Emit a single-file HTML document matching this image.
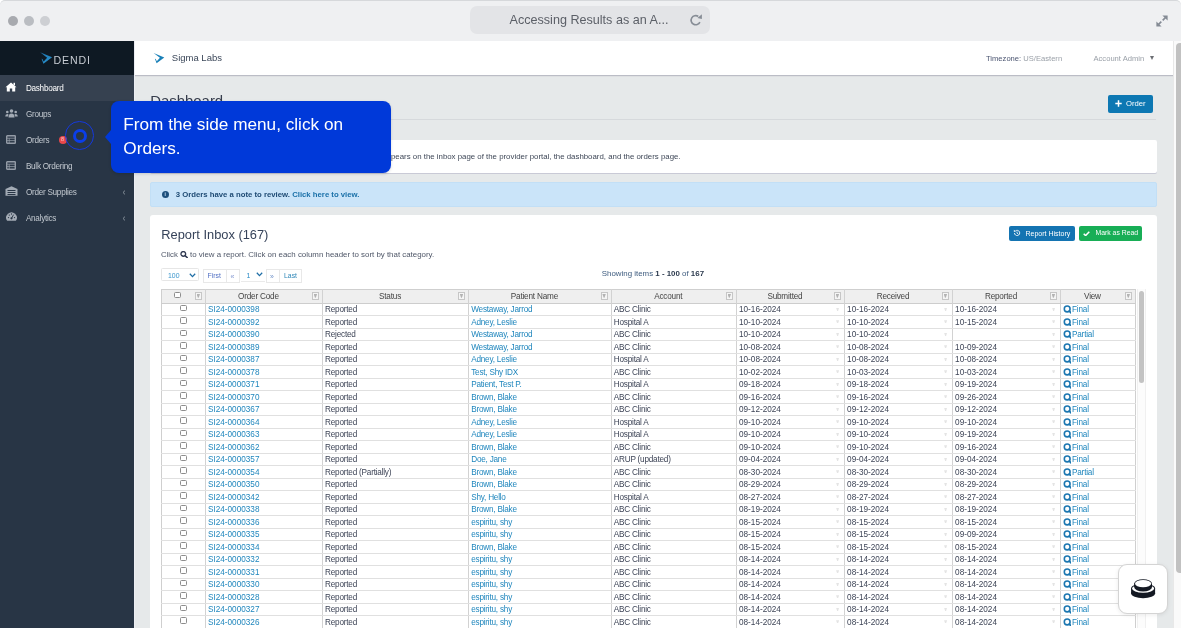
<!DOCTYPE html>
<html><head><meta charset="utf-8"><style>
*{box-sizing:border-box;margin:0;padding:0}
html,body{width:1181px;height:628px;overflow:hidden;background:#eff0f2;font-family:"Liberation Sans", sans-serif}
.a{position:absolute}
.t{position:absolute;white-space:nowrap;line-height:1}
.fi{position:absolute;width:7px;height:8px;border:1px solid #c6c6c6;background:#f5f5f5}
.fi:after{content:"";position:absolute;left:0.8px;top:1.1px;width:3.4px;height:3.6px;background:#b3b3b3;clip-path:polygon(0 0,100% 0,62% 100%,38% 100%)}
.cb{position:absolute;width:6.8px;height:6.8px;border:1px solid #8d8d8d;border-radius:1.5px;background:#fff}
.tri{position:absolute;color:#d6d6d6;font-size:5px}
</style></head><body><div id="root" style="position:absolute;left:0;top:0;width:1181px;height:628px;overflow:hidden;will-change:transform">

<div class="a" style="left:0;top:0;width:1181px;height:41px;background:#fff"></div>
<div class="a" style="left:0;top:0;width:1181px;height:41px;background:#eff0f2;border-top:1px solid #d6d8db;border-radius:5px 5px 0 0"></div>
<div class="a" style="left:8px;top:16px;width:10px;height:10px;border-radius:50%;background:#a8aaaf"></div>
<div class="a" style="left:24px;top:16px;width:10px;height:10px;border-radius:50%;background:#babdc2"></div>
<div class="a" style="left:40px;top:16px;width:10px;height:10px;border-radius:50%;background:#cdcfd3"></div>
<div class="a" style="left:470px;top:6px;width:240px;height:28px;border-radius:7px;background:#e3e4e7"></div>
<div class="t" style="left:509.5px;top:14px;font-size:12.6px;color:#5b5f67">Accessing Results as an A...</div>
<svg class="a" style="left:689px;top:13px" width="14" height="14" viewBox="0 0 14 14"><path d="M10.9 9.1 A4.6 4.6 0 1 1 9.3 3.4" fill="none" stroke="#878d96" stroke-width="1.6"/><path d="M8.4 4.9 L12.9 1.2 L12.9 5.9 Z" fill="#878d96"/></svg>
<svg class="a" style="left:1155px;top:14px" width="14" height="14" viewBox="0 0 14 14"><path d="M3 11 L6.3 7.7 M7.7 6.3 L11 3" stroke="#858b95" stroke-width="1.7"/><path d="M7.4 1.4 L12.6 1.4 L12.6 6.6 Z" fill="#858b95"/><path d="M1.4 7.4 L1.4 12.6 L6.6 12.6 Z" fill="#858b95"/></svg>
<div class="a" style="left:0;top:41px;width:134px;height:587px;background:#283545"></div>
<div class="a" style="left:0;top:41px;width:134px;height:34px;background:#0e1923"></div>
<svg class="a" style="left:35.5px;top:49px" width="18" height="17" viewBox="0 0 16 15.2"><defs><linearGradient id="lg" x1="0" y1="0" x2="1" y2="1"><stop offset="0" stop-color="#1c6ea6"/><stop offset="1" stop-color="#2b9ad8"/></linearGradient></defs><path d="M3.6 3.0 L14.3 7.4 L6.6 13.2 L4.9 8.8 L5.7 8.9 L6.8 11.2 L9.9 7.8 Z" fill="url(#lg)"/></svg>
<div class="t" style="left:53.5px;top:55px;font-size:10.6px;letter-spacing:0.85px;color:#c8cdd4;font-weight:normal">DENDI</div>
<div class="a" style="left:0;top:75px;width:134px;height:26px;background:#364150"></div>
<div class="t" style="left:25.9px;top:84.9px;font-size:8.2px;letter-spacing:-0.28px;color:#ffffff">Dashboard</div>
<div class="t" style="left:25.9px;top:110.9px;font-size:8.2px;letter-spacing:-0.28px;color:#c2c8cf">Groups</div>
<div class="t" style="left:25.9px;top:136.9px;font-size:8.2px;letter-spacing:-0.28px;color:#c2c8cf">Orders</div>
<div class="t" style="left:25.9px;top:162.9px;font-size:8.2px;letter-spacing:-0.28px;color:#c2c8cf">Bulk Ordering</div>
<div class="t" style="left:25.9px;top:188.9px;font-size:8.2px;letter-spacing:-0.28px;color:#c2c8cf">Order Supplies</div>
<div class="t" style="left:25.9px;top:214.9px;font-size:8.2px;letter-spacing:-0.28px;color:#c2c8cf">Analytics</div>
<svg class="a" style="left:5px;top:82px" width="12" height="10" viewBox="0 0 12 10"><path d="M6 0.5 L11.5 5.2 L10.2 5.2 L10.2 9.5 L7.2 9.5 L7.2 6.5 L4.8 6.5 L4.8 9.5 L1.8 9.5 L1.8 5.2 L0.5 5.2 Z" fill="#fff"/><rect x="8.5" y="0.8" width="1.5" height="2.5" fill="#fff"/></svg>
<svg class="a" style="left:5px;top:109px" width="13" height="9" viewBox="0 0 13 9"><circle cx="6.5" cy="2" r="1.8" fill="#a3abb5"/><circle cx="2.3" cy="3" r="1.3" fill="#a3abb5"/><circle cx="10.7" cy="3" r="1.3" fill="#a3abb5"/><path d="M3.5 8.5 Q3.5 4.5 6.5 4.5 Q9.5 4.5 9.5 8.5 Z" fill="#a3abb5"/><path d="M0.2 7.5 Q0.2 5 2.3 5 Q3.2 5 3.5 5.5 L3 7.5 Z" fill="#a3abb5"/><path d="M12.8 7.5 Q12.8 5 10.7 5 Q9.8 5 9.5 5.5 L10 7.5 Z" fill="#a3abb5"/></svg>
<svg class="a" style="left:6px;top:135px" width="10" height="9" viewBox="0 0 10 9"><rect x="0.7" y="0.7" width="8.6" height="7.6" rx="0.6" fill="none" stroke="#949ca7" stroke-width="1.4"/><path d="M0.7 3.2 H9.3 M0.7 5.6 H9.3 M3.2 3.2 V8.3" stroke="#949ca7" stroke-width="0.8"/></svg>
<svg class="a" style="left:6px;top:161px" width="10" height="9" viewBox="0 0 10 9"><rect x="0.7" y="0.7" width="8.6" height="7.6" rx="0.6" fill="none" stroke="#949ca7" stroke-width="1.4"/><path d="M0.7 3.2 H9.3 M0.7 5.6 H9.3 M3.2 3.2 V8.3" stroke="#949ca7" stroke-width="0.8"/></svg>
<svg class="a" style="left:4.5px;top:186px" width="13" height="10" viewBox="0 0 13 10"><path d="M0.5 3 L6.5 0.3 L12.5 3 L12.5 9.7 L0.5 9.7 Z" fill="#a3abb5"/><rect x="2.5" y="4" width="8" height="1" fill="#283545"/><rect x="2.5" y="6" width="8" height="1" fill="#283545"/><rect x="2.5" y="8" width="8" height="1" fill="#283545"/></svg>
<svg class="a" style="left:5.5px;top:212px" width="11" height="9" viewBox="0 0 11 9"><path d="M1.2 8.8 A5.3 5.3 0 1 1 9.8 8.8 Z" fill="#a3abb5"/><circle cx="5.5" cy="6.3" r="1.1" fill="#283545"/><path d="M5.5 6.3 L7.6 2.6" stroke="#283545" stroke-width="0.9"/><circle cx="2.5" cy="5.6" r="0.65" fill="#283545"/><circle cx="3.3" cy="3.1" r="0.65" fill="#283545"/><circle cx="5.5" cy="2" r="0.65" fill="#283545"/><circle cx="8.5" cy="5.6" r="0.65" fill="#283545"/></svg>
<svg class="a" style="left:121.5px;top:189.5px" width="4" height="5" viewBox="0 0 4 5"><path d="M3 0.6 L1 2.5 L3 4.4" fill="none" stroke="#8f98a3" stroke-width="0.9"/></svg>
<svg class="a" style="left:121.5px;top:215.5px" width="4" height="5" viewBox="0 0 4 5"><path d="M3 0.6 L1 2.5 L3 4.4" fill="none" stroke="#8f98a3" stroke-width="0.9"/></svg>
<div class="a" style="left:58.6px;top:135.8px;width:8.4px;height:8.4px;border-radius:50%;background:#e8484b"></div>
<div class="t" style="left:61px;top:137.2px;font-size:5.5px;color:#f7c2c3">8</div>
<div class="a" style="left:134px;top:75px;width:1039px;height:553px;background:#e6e9ea"></div>
<div class="a" style="left:134px;top:41px;width:1039px;height:34px;background:#fff;box-shadow:0 1px 1px rgba(60,60,90,0.25)"></div>
<div class="a" style="left:134px;top:41px;width:1px;height:587px;background:#eceef3"></div>
<svg class="a" style="left:150px;top:50px" width="16" height="16" viewBox="0 0 16 16"><path d="M3.6 3.0 L14.3 7.4 L6.6 13.2 L4.9 8.8 L5.7 8.9 L6.8 11.2 L9.9 7.8 Z" fill="#1a80b8"/></svg>
<div class="t" style="left:171.8px;top:52.9px;font-size:9.5px;color:#3b4759">Sigma Labs</div>
<div class="t" style="left:986px;top:54.8px;font-size:7.6px;color:#4a5470">Timezone: <span style="color:#9aa0a8">US/Eastern</span></div>
<div class="t" style="left:1093.5px;top:54.8px;font-size:7.6px;color:#9aa0a8">Account Admin</div>
<div class="a" style="left:1150.4px;top:55.6px;border-left:2.4px solid transparent;border-right:2.4px solid transparent;border-top:4.6px solid #6b6e73"></div>
<div class="a" style="left:1173px;top:41px;width:8px;height:587px;background:#fafafa;border-left:1px solid #e8e8e8"></div>
<div class="a" style="left:1176px;top:42.7px;width:8px;height:530px;background:#c1c1c1;border-radius:4px"></div>
<div class="t" style="left:150.3px;top:93.7px;font-size:14.9px;color:#363d4c">Dashboard</div>
<div class="a" style="left:150px;top:119px;width:1006px;height:1px;background:#d6d9dc"></div>
<div class="a" style="left:1107.7px;top:95px;width:45px;height:18px;background:#0d78b3;border-radius:2px"></div>
<svg class="a" style="left:1115px;top:100.2px" width="7" height="7" viewBox="0 0 7 7"><path d="M3.5 0.3 V6.7 M0.3 3.5 H6.7" stroke="#fff" stroke-width="1.5"/></svg>
<div class="t" style="left:1126px;top:99.9px;font-size:7.7px;color:#fff">Order</div>
<div class="a" style="left:150px;top:139.7px;width:1007px;height:33.3px;background:#fff;border-radius:2px;box-shadow:0 1px 0 #c9cad6"></div>
<div class="t" style="left:391px;top:152.9px;font-size:7.85px;color:#3f4858">pears on the inbox page of the provider portal, the dashboard, and the orders page.</div>
<div class="a" style="left:150px;top:182px;width:1007px;height:25.4px;background:#cae4f9;border:1px solid #c2dff6;border-radius:2px"></div>
<div class="a" style="left:161.6px;top:190.6px;width:7px;height:7px;border-radius:50%;background:#1d4f7c"></div>
<div class="t" style="left:164.4px;top:191.6px;font-size:5px;color:#cae4f9;font-weight:bold">i</div>
<div class="t" style="left:175.7px;top:190.9px;font-size:7.75px;font-weight:bold;color:#1e4a73">3 Orders have a note to review. <span style="color:#1a70a8">Click here to view.</span></div>
<div class="a" style="left:150px;top:215.2px;width:1007px;height:420px;background:#fff;border-radius:3px"></div>
<div class="t" style="left:161.3px;top:229.3px;font-size:12.85px;color:#36435a">Report Inbox (167)</div>
<div class="t" style="left:161px;top:250.7px;font-size:7.8px;color:#4f5768">Click</div>
<svg class="a" style="left:179.5px;top:250.8px" width="8" height="7" viewBox="0 0 8 7"><circle cx="3.3" cy="2.9" r="2.35" fill="none" stroke="#2f3850" stroke-width="1.3"/><path d="M5 4.6 L7.2 6.6" stroke="#2f3850" stroke-width="1.5" stroke-linecap="round"/></svg>
<div class="t" style="left:190px;top:250.7px;font-size:7.9px;color:#4f5768">to view a report. Click on each column header to sort by that category.</div>
<div class="a" style="left:1009px;top:226px;width:66px;height:15px;background:#1474b2;border-radius:2px"></div>
<div class="t" style="left:1025.5px;top:229.9px;font-size:7px;color:#fff">Report History</div>
<svg class="a" style="left:1012.5px;top:229px" width="8" height="8" viewBox="0 0 8 8"><path d="M1.5 4 A2.6 2.6 0 1 0 2.4 2" fill="none" stroke="#fff" stroke-width="0.9"/><path d="M0.8 0.8 L2.8 2.2 L0.9 3 Z" fill="#fff"/><path d="M4 2.5 V4.2 L5.2 5" stroke="#fff" stroke-width="0.8" fill="none"/></svg>
<div class="a" style="left:1079px;top:226px;width:63px;height:15px;background:#18ae56;border-radius:2px"></div>
<svg class="a" style="left:1083px;top:230.5px" width="7" height="5.5" viewBox="0 0 7 5.5"><path d="M0.7 2.8 L2.6 4.6 L6.3 0.8" fill="none" stroke="#fff" stroke-width="1.5"/></svg>
<div class="t" style="left:1095.5px;top:230.2px;font-size:6.85px;color:#fff">Mark as Read</div>
<div class="a" style="left:161.2px;top:268.4px;width:38px;height:13.1px;border:1px solid #e6e6e6;border-radius:1.5px;background:#fff"></div>
<div class="t" style="left:168px;top:272.5px;font-size:6.9px;color:#3a95cc">100</div>
<svg class="a" style="left:189px;top:272.5px" width="7" height="5" viewBox="0 0 7 5"><path d="M0.8 0.8 L3.5 3.6 L6.2 0.8" fill="none" stroke="#1f6ea6" stroke-width="1.3"/></svg>
<div class="a" style="left:203px;top:268.6px;width:37.2px;height:14.8px;border:1px solid #e8e8e8;background:#fff"></div>
<div class="a" style="left:225.5px;top:268.6px;width:1px;height:14.8px;background:#e8e8e8"></div>
<div class="t" style="left:207.5px;top:272.5px;font-size:6.9px;color:#5170c4">First</div>
<div class="t" style="left:230.5px;top:273.8px;font-size:6.9px;color:#8095d0">&laquo;</div>
<div class="a" style="left:240.7px;top:280.6px;width:24.3px;height:1px;background:#eaeaea"></div>
<div class="t" style="left:246.5px;top:272.8px;font-size:6.9px;color:#2a8bc6">1</div>
<svg class="a" style="left:256px;top:272px" width="7" height="5" viewBox="0 0 7 5"><path d="M0.8 0.8 L3.5 3.6 L6.2 0.8" fill="none" stroke="#1f6ea6" stroke-width="1.3"/></svg>
<div class="a" style="left:265.6px;top:268.6px;width:36px;height:14.8px;border:1px solid #e8e8e8;background:#fff"></div>
<div class="a" style="left:279.3px;top:268.6px;width:1px;height:14.8px;background:#e8e8e8"></div>
<div class="t" style="left:270px;top:273.8px;font-size:6.9px;color:#6c8fc9">&raquo;</div>
<div class="t" style="left:284px;top:272.5px;font-size:6.9px;color:#2f87b8">Last</div>
<div class="t" style="left:601.8px;top:270.2px;font-size:7.9px;color:#3d5b7e">Showing items <b style="color:#2c3a4e">1 - 100</b> of <b style="color:#2c3a4e">167</b></div>
<div class="a" style="left:161.0px;top:289.3px;width:975.0000000000001px;height:14.3px;background:#efefef;border:1px solid #cfcfcf;border-bottom:1px solid #cdcdcd"></div>
<div class="a" style="left:161.0px;top:303.6px;width:975.0000000000001px;height:329.4px;background:#fff;border-left:1px solid #cfcfcf;border-right:1px solid #cfcfcf"></div>
<div class="a" style="left:204.9px;top:289.3px;width:1px;height:338.7px;background:#d2d2d2"></div>
<div class="a" style="left:322.0px;top:289.3px;width:1px;height:338.7px;background:#d2d2d2"></div>
<div class="a" style="left:468.1px;top:289.3px;width:1px;height:338.7px;background:#d2d2d2"></div>
<div class="a" style="left:610.7px;top:289.3px;width:1px;height:338.7px;background:#d2d2d2"></div>
<div class="a" style="left:735.9px;top:289.3px;width:1px;height:338.7px;background:#d2d2d2"></div>
<div class="a" style="left:844.0px;top:289.3px;width:1px;height:338.7px;background:#d2d2d2"></div>
<div class="a" style="left:952.0px;top:289.3px;width:1px;height:338.7px;background:#d2d2d2"></div>
<div class="a" style="left:1060.0px;top:289.3px;width:1px;height:338.7px;background:#d2d2d2"></div>
<div class="a" style="left:161.0px;top:315.40px;width:975.0000000000001px;height:1px;background:#e0e0e0"></div>
<div class="a" style="left:161.0px;top:327.90px;width:975.0000000000001px;height:1px;background:#e0e0e0"></div>
<div class="a" style="left:161.0px;top:340.40px;width:975.0000000000001px;height:1px;background:#e0e0e0"></div>
<div class="a" style="left:161.0px;top:352.90px;width:975.0000000000001px;height:1px;background:#e0e0e0"></div>
<div class="a" style="left:161.0px;top:365.40px;width:975.0000000000001px;height:1px;background:#e0e0e0"></div>
<div class="a" style="left:161.0px;top:377.90px;width:975.0000000000001px;height:1px;background:#e0e0e0"></div>
<div class="a" style="left:161.0px;top:390.40px;width:975.0000000000001px;height:1px;background:#e0e0e0"></div>
<div class="a" style="left:161.0px;top:402.90px;width:975.0000000000001px;height:1px;background:#e0e0e0"></div>
<div class="a" style="left:161.0px;top:415.40px;width:975.0000000000001px;height:1px;background:#e0e0e0"></div>
<div class="a" style="left:161.0px;top:427.90px;width:975.0000000000001px;height:1px;background:#e0e0e0"></div>
<div class="a" style="left:161.0px;top:440.40px;width:975.0000000000001px;height:1px;background:#e0e0e0"></div>
<div class="a" style="left:161.0px;top:452.90px;width:975.0000000000001px;height:1px;background:#e0e0e0"></div>
<div class="a" style="left:161.0px;top:465.40px;width:975.0000000000001px;height:1px;background:#e0e0e0"></div>
<div class="a" style="left:161.0px;top:477.90px;width:975.0000000000001px;height:1px;background:#e0e0e0"></div>
<div class="a" style="left:161.0px;top:490.40px;width:975.0000000000001px;height:1px;background:#e0e0e0"></div>
<div class="a" style="left:161.0px;top:502.90px;width:975.0000000000001px;height:1px;background:#e0e0e0"></div>
<div class="a" style="left:161.0px;top:515.40px;width:975.0000000000001px;height:1px;background:#e0e0e0"></div>
<div class="a" style="left:161.0px;top:527.90px;width:975.0000000000001px;height:1px;background:#e0e0e0"></div>
<div class="a" style="left:161.0px;top:540.40px;width:975.0000000000001px;height:1px;background:#e0e0e0"></div>
<div class="a" style="left:161.0px;top:552.90px;width:975.0000000000001px;height:1px;background:#e0e0e0"></div>
<div class="a" style="left:161.0px;top:565.40px;width:975.0000000000001px;height:1px;background:#e0e0e0"></div>
<div class="a" style="left:161.0px;top:577.90px;width:975.0000000000001px;height:1px;background:#e0e0e0"></div>
<div class="a" style="left:161.0px;top:590.40px;width:975.0000000000001px;height:1px;background:#e0e0e0"></div>
<div class="a" style="left:161.0px;top:602.90px;width:975.0000000000001px;height:1px;background:#e0e0e0"></div>
<div class="a" style="left:161.0px;top:615.40px;width:975.0000000000001px;height:1px;background:#e0e0e0"></div>
<span class="fi" style="left:194.8px;top:292.0px"></span>
<div class="t" style="left:203.9px;width:109.1px;text-align:center;top:292.7px;font-size:8.2px;letter-spacing:-0.2px;color:#454545">Order Code</div>
<span class="fi" style="left:311.9px;top:292.0px"></span>
<div class="t" style="left:321.0px;width:138.10000000000002px;text-align:center;top:292.7px;font-size:8.2px;letter-spacing:-0.2px;color:#454545">Status</div>
<span class="fi" style="left:458.0px;top:292.0px"></span>
<div class="t" style="left:467.1px;width:134.60000000000002px;text-align:center;top:292.7px;font-size:8.2px;letter-spacing:-0.2px;color:#454545">Patient Name</div>
<span class="fi" style="left:600.6px;top:292.0px"></span>
<div class="t" style="left:609.7px;width:117.19999999999993px;text-align:center;top:292.7px;font-size:8.2px;letter-spacing:-0.2px;color:#454545">Account</div>
<span class="fi" style="left:725.8px;top:292.0px"></span>
<div class="t" style="left:734.9px;width:100.10000000000002px;text-align:center;top:292.7px;font-size:8.2px;letter-spacing:-0.2px;color:#454545">Submitted</div>
<span class="fi" style="left:833.9px;top:292.0px"></span>
<div class="t" style="left:843.0px;width:100.0px;text-align:center;top:292.7px;font-size:8.2px;letter-spacing:-0.2px;color:#454545">Received</div>
<span class="fi" style="left:941.9px;top:292.0px"></span>
<div class="t" style="left:951.0px;width:100.0px;text-align:center;top:292.7px;font-size:8.2px;letter-spacing:-0.2px;color:#454545">Reported</div>
<span class="fi" style="left:1049.9px;top:292.0px"></span>
<div class="t" style="left:1059.0px;width:66.90000000000009px;text-align:center;top:292.7px;font-size:8.2px;letter-spacing:-0.2px;color:#454545">View</div>
<span class="fi" style="left:1124.8000000000002px;top:292.0px"></span>
<span class="cb" style="left:174.4px;top:291.5px"></span>
<div class="a" style="left:1137px;top:289.3px;width:9px;height:338.7px;background:#fcfcfc;border-left:1px solid #f0f0f0;border-right:1px solid #f0f0f0"></div>
<div class="a" style="left:1139px;top:291px;width:5.2px;height:92px;background:#c3c3c3;border-radius:2.6px"></div>
<span class="cb" style="left:180px;top:304.50px"></span>
<div class="t" style="left:208.0px;top:306.40px;font-size:8.2px;letter-spacing:0px;color:#1f86bd">SI24-0000398</div>
<div class="t" style="left:325.1px;top:306.40px;font-size:8.2px;letter-spacing:-0.22px;color:#3d4456">Reported</div>
<div class="t" style="left:471.20000000000005px;top:306.40px;font-size:8.2px;letter-spacing:-0.22px;color:#1f86bd">Westaway, Jarrod</div>
<div class="t" style="left:613.8000000000001px;top:306.40px;font-size:8.2px;letter-spacing:-0.22px;color:#3d4456">ABC Clinic</div>
<div class="t" style="left:739.0px;top:306.40px;font-size:8.2px;letter-spacing:0px;color:#3d4456">10-16-2024</div>
<div class="a" style="left:836.1px;top:307.80px;width:3px;height:3.2px;background:#e4e4e4;clip-path:polygon(0 0,100% 0,65% 100%,35% 100%)"></div>
<div class="t" style="left:847.1px;top:306.40px;font-size:8.2px;letter-spacing:0px;color:#3d4456">10-16-2024</div>
<div class="a" style="left:944.1px;top:307.80px;width:3px;height:3.2px;background:#e4e4e4;clip-path:polygon(0 0,100% 0,65% 100%,35% 100%)"></div>
<div class="t" style="left:955.1px;top:306.40px;font-size:8.2px;letter-spacing:0px;color:#3d4456">10-16-2024</div>
<div class="a" style="left:1052.1px;top:307.80px;width:3px;height:3.2px;background:#e4e4e4;clip-path:polygon(0 0,100% 0,65% 100%,35% 100%)"></div>
<div class="a" style="left:1062.6px;top:305.20px;width:8.6px;height:8.6px"><svg style="position:absolute;left:0;top:0" width="8.6" height="8.6" viewBox="0 0 8 8"><circle cx="3.9" cy="3.7" r="2.7" fill="none" stroke="#1b76b0" stroke-width="1.45"/><path d="M5.9 5.7 L7.5 7.4" stroke="#1b76b0" stroke-width="1.7" stroke-linecap="round"/></svg></div>
<div class="t" style="left:1072.0px;top:306.40px;font-size:8.2px;letter-spacing:-0.2px;color:#1f86bd">Final</div>
<span class="cb" style="left:180px;top:317.00px"></span>
<div class="t" style="left:208.0px;top:318.90px;font-size:8.2px;letter-spacing:0px;color:#1f86bd">SI24-0000392</div>
<div class="t" style="left:325.1px;top:318.90px;font-size:8.2px;letter-spacing:-0.22px;color:#3d4456">Reported</div>
<div class="t" style="left:471.20000000000005px;top:318.90px;font-size:8.2px;letter-spacing:-0.22px;color:#1f86bd">Adney, Leslie</div>
<div class="t" style="left:613.8000000000001px;top:318.90px;font-size:8.2px;letter-spacing:-0.22px;color:#3d4456">Hospital A</div>
<div class="t" style="left:739.0px;top:318.90px;font-size:8.2px;letter-spacing:0px;color:#3d4456">10-10-2024</div>
<div class="a" style="left:836.1px;top:320.30px;width:3px;height:3.2px;background:#e4e4e4;clip-path:polygon(0 0,100% 0,65% 100%,35% 100%)"></div>
<div class="t" style="left:847.1px;top:318.90px;font-size:8.2px;letter-spacing:0px;color:#3d4456">10-10-2024</div>
<div class="a" style="left:944.1px;top:320.30px;width:3px;height:3.2px;background:#e4e4e4;clip-path:polygon(0 0,100% 0,65% 100%,35% 100%)"></div>
<div class="t" style="left:955.1px;top:318.90px;font-size:8.2px;letter-spacing:0px;color:#3d4456">10-15-2024</div>
<div class="a" style="left:1052.1px;top:320.30px;width:3px;height:3.2px;background:#e4e4e4;clip-path:polygon(0 0,100% 0,65% 100%,35% 100%)"></div>
<div class="a" style="left:1062.6px;top:317.70px;width:8.6px;height:8.6px"><svg style="position:absolute;left:0;top:0" width="8.6" height="8.6" viewBox="0 0 8 8"><circle cx="3.9" cy="3.7" r="2.7" fill="none" stroke="#1b76b0" stroke-width="1.45"/><path d="M5.9 5.7 L7.5 7.4" stroke="#1b76b0" stroke-width="1.7" stroke-linecap="round"/></svg></div>
<div class="t" style="left:1072.0px;top:318.90px;font-size:8.2px;letter-spacing:-0.2px;color:#1f86bd">Final</div>
<span class="cb" style="left:180px;top:329.50px"></span>
<div class="t" style="left:208.0px;top:331.40px;font-size:8.2px;letter-spacing:0px;color:#1f86bd">SI24-0000390</div>
<div class="t" style="left:325.1px;top:331.40px;font-size:8.2px;letter-spacing:-0.22px;color:#3d4456">Rejected</div>
<div class="t" style="left:471.20000000000005px;top:331.40px;font-size:8.2px;letter-spacing:-0.22px;color:#1f86bd">Westaway, Jarrod</div>
<div class="t" style="left:613.8000000000001px;top:331.40px;font-size:8.2px;letter-spacing:-0.22px;color:#3d4456">ABC Clinic</div>
<div class="t" style="left:739.0px;top:331.40px;font-size:8.2px;letter-spacing:0px;color:#3d4456">10-10-2024</div>
<div class="a" style="left:836.1px;top:332.80px;width:3px;height:3.2px;background:#e4e4e4;clip-path:polygon(0 0,100% 0,65% 100%,35% 100%)"></div>
<div class="t" style="left:847.1px;top:331.40px;font-size:8.2px;letter-spacing:0px;color:#3d4456">10-10-2024</div>
<div class="a" style="left:944.1px;top:332.80px;width:3px;height:3.2px;background:#e4e4e4;clip-path:polygon(0 0,100% 0,65% 100%,35% 100%)"></div>
<div class="a" style="left:1052.1px;top:332.80px;width:3px;height:3.2px;background:#e4e4e4;clip-path:polygon(0 0,100% 0,65% 100%,35% 100%)"></div>
<div class="a" style="left:1062.6px;top:330.20px;width:8.6px;height:8.6px"><svg style="position:absolute;left:0;top:0" width="8.6" height="8.6" viewBox="0 0 8 8"><circle cx="3.9" cy="3.7" r="2.7" fill="none" stroke="#1b76b0" stroke-width="1.45"/><path d="M5.9 5.7 L7.5 7.4" stroke="#1b76b0" stroke-width="1.7" stroke-linecap="round"/></svg></div>
<div class="t" style="left:1072.0px;top:331.40px;font-size:8.2px;letter-spacing:-0.2px;color:#1f86bd">Partial</div>
<span class="cb" style="left:180px;top:342.00px"></span>
<div class="t" style="left:208.0px;top:343.90px;font-size:8.2px;letter-spacing:0px;color:#1f86bd">SI24-0000389</div>
<div class="t" style="left:325.1px;top:343.90px;font-size:8.2px;letter-spacing:-0.22px;color:#3d4456">Reported</div>
<div class="t" style="left:471.20000000000005px;top:343.90px;font-size:8.2px;letter-spacing:-0.22px;color:#1f86bd">Westaway, Jarrod</div>
<div class="t" style="left:613.8000000000001px;top:343.90px;font-size:8.2px;letter-spacing:-0.22px;color:#3d4456">ABC Clinic</div>
<div class="t" style="left:739.0px;top:343.90px;font-size:8.2px;letter-spacing:0px;color:#3d4456">10-08-2024</div>
<div class="a" style="left:836.1px;top:345.30px;width:3px;height:3.2px;background:#e4e4e4;clip-path:polygon(0 0,100% 0,65% 100%,35% 100%)"></div>
<div class="t" style="left:847.1px;top:343.90px;font-size:8.2px;letter-spacing:0px;color:#3d4456">10-08-2024</div>
<div class="a" style="left:944.1px;top:345.30px;width:3px;height:3.2px;background:#e4e4e4;clip-path:polygon(0 0,100% 0,65% 100%,35% 100%)"></div>
<div class="t" style="left:955.1px;top:343.90px;font-size:8.2px;letter-spacing:0px;color:#3d4456">10-09-2024</div>
<div class="a" style="left:1052.1px;top:345.30px;width:3px;height:3.2px;background:#e4e4e4;clip-path:polygon(0 0,100% 0,65% 100%,35% 100%)"></div>
<div class="a" style="left:1062.6px;top:342.70px;width:8.6px;height:8.6px"><svg style="position:absolute;left:0;top:0" width="8.6" height="8.6" viewBox="0 0 8 8"><circle cx="3.9" cy="3.7" r="2.7" fill="none" stroke="#1b76b0" stroke-width="1.45"/><path d="M5.9 5.7 L7.5 7.4" stroke="#1b76b0" stroke-width="1.7" stroke-linecap="round"/></svg></div>
<div class="t" style="left:1072.0px;top:343.90px;font-size:8.2px;letter-spacing:-0.2px;color:#1f86bd">Final</div>
<span class="cb" style="left:180px;top:354.50px"></span>
<div class="t" style="left:208.0px;top:356.40px;font-size:8.2px;letter-spacing:0px;color:#1f86bd">SI24-0000387</div>
<div class="t" style="left:325.1px;top:356.40px;font-size:8.2px;letter-spacing:-0.22px;color:#3d4456">Reported</div>
<div class="t" style="left:471.20000000000005px;top:356.40px;font-size:8.2px;letter-spacing:-0.22px;color:#1f86bd">Adney, Leslie</div>
<div class="t" style="left:613.8000000000001px;top:356.40px;font-size:8.2px;letter-spacing:-0.22px;color:#3d4456">Hospital A</div>
<div class="t" style="left:739.0px;top:356.40px;font-size:8.2px;letter-spacing:0px;color:#3d4456">10-08-2024</div>
<div class="a" style="left:836.1px;top:357.80px;width:3px;height:3.2px;background:#e4e4e4;clip-path:polygon(0 0,100% 0,65% 100%,35% 100%)"></div>
<div class="t" style="left:847.1px;top:356.40px;font-size:8.2px;letter-spacing:0px;color:#3d4456">10-08-2024</div>
<div class="a" style="left:944.1px;top:357.80px;width:3px;height:3.2px;background:#e4e4e4;clip-path:polygon(0 0,100% 0,65% 100%,35% 100%)"></div>
<div class="t" style="left:955.1px;top:356.40px;font-size:8.2px;letter-spacing:0px;color:#3d4456">10-08-2024</div>
<div class="a" style="left:1052.1px;top:357.80px;width:3px;height:3.2px;background:#e4e4e4;clip-path:polygon(0 0,100% 0,65% 100%,35% 100%)"></div>
<div class="a" style="left:1062.6px;top:355.20px;width:8.6px;height:8.6px"><svg style="position:absolute;left:0;top:0" width="8.6" height="8.6" viewBox="0 0 8 8"><circle cx="3.9" cy="3.7" r="2.7" fill="none" stroke="#1b76b0" stroke-width="1.45"/><path d="M5.9 5.7 L7.5 7.4" stroke="#1b76b0" stroke-width="1.7" stroke-linecap="round"/></svg></div>
<div class="t" style="left:1072.0px;top:356.40px;font-size:8.2px;letter-spacing:-0.2px;color:#1f86bd">Final</div>
<span class="cb" style="left:180px;top:367.00px"></span>
<div class="t" style="left:208.0px;top:368.90px;font-size:8.2px;letter-spacing:0px;color:#1f86bd">SI24-0000378</div>
<div class="t" style="left:325.1px;top:368.90px;font-size:8.2px;letter-spacing:-0.22px;color:#3d4456">Reported</div>
<div class="t" style="left:471.20000000000005px;top:368.90px;font-size:8.2px;letter-spacing:-0.22px;color:#1f86bd">Test, Shy IDX</div>
<div class="t" style="left:613.8000000000001px;top:368.90px;font-size:8.2px;letter-spacing:-0.22px;color:#3d4456">ABC Clinic</div>
<div class="t" style="left:739.0px;top:368.90px;font-size:8.2px;letter-spacing:0px;color:#3d4456">10-02-2024</div>
<div class="a" style="left:836.1px;top:370.30px;width:3px;height:3.2px;background:#e4e4e4;clip-path:polygon(0 0,100% 0,65% 100%,35% 100%)"></div>
<div class="t" style="left:847.1px;top:368.90px;font-size:8.2px;letter-spacing:0px;color:#3d4456">10-03-2024</div>
<div class="a" style="left:944.1px;top:370.30px;width:3px;height:3.2px;background:#e4e4e4;clip-path:polygon(0 0,100% 0,65% 100%,35% 100%)"></div>
<div class="t" style="left:955.1px;top:368.90px;font-size:8.2px;letter-spacing:0px;color:#3d4456">10-03-2024</div>
<div class="a" style="left:1052.1px;top:370.30px;width:3px;height:3.2px;background:#e4e4e4;clip-path:polygon(0 0,100% 0,65% 100%,35% 100%)"></div>
<div class="a" style="left:1062.6px;top:367.70px;width:8.6px;height:8.6px"><svg style="position:absolute;left:0;top:0" width="8.6" height="8.6" viewBox="0 0 8 8"><circle cx="3.9" cy="3.7" r="2.7" fill="none" stroke="#1b76b0" stroke-width="1.45"/><path d="M5.9 5.7 L7.5 7.4" stroke="#1b76b0" stroke-width="1.7" stroke-linecap="round"/></svg></div>
<div class="t" style="left:1072.0px;top:368.90px;font-size:8.2px;letter-spacing:-0.2px;color:#1f86bd">Final</div>
<span class="cb" style="left:180px;top:379.50px"></span>
<div class="t" style="left:208.0px;top:381.40px;font-size:8.2px;letter-spacing:0px;color:#1f86bd">SI24-0000371</div>
<div class="t" style="left:325.1px;top:381.40px;font-size:8.2px;letter-spacing:-0.22px;color:#3d4456">Reported</div>
<div class="t" style="left:471.20000000000005px;top:381.40px;font-size:8.2px;letter-spacing:-0.22px;color:#1f86bd">Patient, Test P.</div>
<div class="t" style="left:613.8000000000001px;top:381.40px;font-size:8.2px;letter-spacing:-0.22px;color:#3d4456">Hospital A</div>
<div class="t" style="left:739.0px;top:381.40px;font-size:8.2px;letter-spacing:0px;color:#3d4456">09-18-2024</div>
<div class="a" style="left:836.1px;top:382.80px;width:3px;height:3.2px;background:#e4e4e4;clip-path:polygon(0 0,100% 0,65% 100%,35% 100%)"></div>
<div class="t" style="left:847.1px;top:381.40px;font-size:8.2px;letter-spacing:0px;color:#3d4456">09-18-2024</div>
<div class="a" style="left:944.1px;top:382.80px;width:3px;height:3.2px;background:#e4e4e4;clip-path:polygon(0 0,100% 0,65% 100%,35% 100%)"></div>
<div class="t" style="left:955.1px;top:381.40px;font-size:8.2px;letter-spacing:0px;color:#3d4456">09-19-2024</div>
<div class="a" style="left:1052.1px;top:382.80px;width:3px;height:3.2px;background:#e4e4e4;clip-path:polygon(0 0,100% 0,65% 100%,35% 100%)"></div>
<div class="a" style="left:1062.6px;top:380.20px;width:8.6px;height:8.6px"><svg style="position:absolute;left:0;top:0" width="8.6" height="8.6" viewBox="0 0 8 8"><circle cx="3.9" cy="3.7" r="2.7" fill="none" stroke="#1b76b0" stroke-width="1.45"/><path d="M5.9 5.7 L7.5 7.4" stroke="#1b76b0" stroke-width="1.7" stroke-linecap="round"/></svg></div>
<div class="t" style="left:1072.0px;top:381.40px;font-size:8.2px;letter-spacing:-0.2px;color:#1f86bd">Final</div>
<span class="cb" style="left:180px;top:392.00px"></span>
<div class="t" style="left:208.0px;top:393.90px;font-size:8.2px;letter-spacing:0px;color:#1f86bd">SI24-0000370</div>
<div class="t" style="left:325.1px;top:393.90px;font-size:8.2px;letter-spacing:-0.22px;color:#3d4456">Reported</div>
<div class="t" style="left:471.20000000000005px;top:393.90px;font-size:8.2px;letter-spacing:-0.22px;color:#1f86bd">Brown, Blake</div>
<div class="t" style="left:613.8000000000001px;top:393.90px;font-size:8.2px;letter-spacing:-0.22px;color:#3d4456">ABC Clinic</div>
<div class="t" style="left:739.0px;top:393.90px;font-size:8.2px;letter-spacing:0px;color:#3d4456">09-16-2024</div>
<div class="a" style="left:836.1px;top:395.30px;width:3px;height:3.2px;background:#e4e4e4;clip-path:polygon(0 0,100% 0,65% 100%,35% 100%)"></div>
<div class="t" style="left:847.1px;top:393.90px;font-size:8.2px;letter-spacing:0px;color:#3d4456">09-16-2024</div>
<div class="a" style="left:944.1px;top:395.30px;width:3px;height:3.2px;background:#e4e4e4;clip-path:polygon(0 0,100% 0,65% 100%,35% 100%)"></div>
<div class="t" style="left:955.1px;top:393.90px;font-size:8.2px;letter-spacing:0px;color:#3d4456">09-26-2024</div>
<div class="a" style="left:1052.1px;top:395.30px;width:3px;height:3.2px;background:#e4e4e4;clip-path:polygon(0 0,100% 0,65% 100%,35% 100%)"></div>
<div class="a" style="left:1062.6px;top:392.70px;width:8.6px;height:8.6px"><svg style="position:absolute;left:0;top:0" width="8.6" height="8.6" viewBox="0 0 8 8"><circle cx="3.9" cy="3.7" r="2.7" fill="none" stroke="#1b76b0" stroke-width="1.45"/><path d="M5.9 5.7 L7.5 7.4" stroke="#1b76b0" stroke-width="1.7" stroke-linecap="round"/></svg></div>
<div class="t" style="left:1072.0px;top:393.90px;font-size:8.2px;letter-spacing:-0.2px;color:#1f86bd">Final</div>
<span class="cb" style="left:180px;top:404.50px"></span>
<div class="t" style="left:208.0px;top:406.40px;font-size:8.2px;letter-spacing:0px;color:#1f86bd">SI24-0000367</div>
<div class="t" style="left:325.1px;top:406.40px;font-size:8.2px;letter-spacing:-0.22px;color:#3d4456">Reported</div>
<div class="t" style="left:471.20000000000005px;top:406.40px;font-size:8.2px;letter-spacing:-0.22px;color:#1f86bd">Brown, Blake</div>
<div class="t" style="left:613.8000000000001px;top:406.40px;font-size:8.2px;letter-spacing:-0.22px;color:#3d4456">ABC Clinic</div>
<div class="t" style="left:739.0px;top:406.40px;font-size:8.2px;letter-spacing:0px;color:#3d4456">09-12-2024</div>
<div class="a" style="left:836.1px;top:407.80px;width:3px;height:3.2px;background:#e4e4e4;clip-path:polygon(0 0,100% 0,65% 100%,35% 100%)"></div>
<div class="t" style="left:847.1px;top:406.40px;font-size:8.2px;letter-spacing:0px;color:#3d4456">09-12-2024</div>
<div class="a" style="left:944.1px;top:407.80px;width:3px;height:3.2px;background:#e4e4e4;clip-path:polygon(0 0,100% 0,65% 100%,35% 100%)"></div>
<div class="t" style="left:955.1px;top:406.40px;font-size:8.2px;letter-spacing:0px;color:#3d4456">09-12-2024</div>
<div class="a" style="left:1052.1px;top:407.80px;width:3px;height:3.2px;background:#e4e4e4;clip-path:polygon(0 0,100% 0,65% 100%,35% 100%)"></div>
<div class="a" style="left:1062.6px;top:405.20px;width:8.6px;height:8.6px"><svg style="position:absolute;left:0;top:0" width="8.6" height="8.6" viewBox="0 0 8 8"><circle cx="3.9" cy="3.7" r="2.7" fill="none" stroke="#1b76b0" stroke-width="1.45"/><path d="M5.9 5.7 L7.5 7.4" stroke="#1b76b0" stroke-width="1.7" stroke-linecap="round"/></svg></div>
<div class="t" style="left:1072.0px;top:406.40px;font-size:8.2px;letter-spacing:-0.2px;color:#1f86bd">Final</div>
<span class="cb" style="left:180px;top:417.00px"></span>
<div class="t" style="left:208.0px;top:418.90px;font-size:8.2px;letter-spacing:0px;color:#1f86bd">SI24-0000364</div>
<div class="t" style="left:325.1px;top:418.90px;font-size:8.2px;letter-spacing:-0.22px;color:#3d4456">Reported</div>
<div class="t" style="left:471.20000000000005px;top:418.90px;font-size:8.2px;letter-spacing:-0.22px;color:#1f86bd">Adney, Leslie</div>
<div class="t" style="left:613.8000000000001px;top:418.90px;font-size:8.2px;letter-spacing:-0.22px;color:#3d4456">Hospital A</div>
<div class="t" style="left:739.0px;top:418.90px;font-size:8.2px;letter-spacing:0px;color:#3d4456">09-10-2024</div>
<div class="a" style="left:836.1px;top:420.30px;width:3px;height:3.2px;background:#e4e4e4;clip-path:polygon(0 0,100% 0,65% 100%,35% 100%)"></div>
<div class="t" style="left:847.1px;top:418.90px;font-size:8.2px;letter-spacing:0px;color:#3d4456">09-10-2024</div>
<div class="a" style="left:944.1px;top:420.30px;width:3px;height:3.2px;background:#e4e4e4;clip-path:polygon(0 0,100% 0,65% 100%,35% 100%)"></div>
<div class="t" style="left:955.1px;top:418.90px;font-size:8.2px;letter-spacing:0px;color:#3d4456">09-10-2024</div>
<div class="a" style="left:1052.1px;top:420.30px;width:3px;height:3.2px;background:#e4e4e4;clip-path:polygon(0 0,100% 0,65% 100%,35% 100%)"></div>
<div class="a" style="left:1062.6px;top:417.70px;width:8.6px;height:8.6px"><svg style="position:absolute;left:0;top:0" width="8.6" height="8.6" viewBox="0 0 8 8"><circle cx="3.9" cy="3.7" r="2.7" fill="none" stroke="#1b76b0" stroke-width="1.45"/><path d="M5.9 5.7 L7.5 7.4" stroke="#1b76b0" stroke-width="1.7" stroke-linecap="round"/></svg></div>
<div class="t" style="left:1072.0px;top:418.90px;font-size:8.2px;letter-spacing:-0.2px;color:#1f86bd">Final</div>
<span class="cb" style="left:180px;top:429.50px"></span>
<div class="t" style="left:208.0px;top:431.40px;font-size:8.2px;letter-spacing:0px;color:#1f86bd">SI24-0000363</div>
<div class="t" style="left:325.1px;top:431.40px;font-size:8.2px;letter-spacing:-0.22px;color:#3d4456">Reported</div>
<div class="t" style="left:471.20000000000005px;top:431.40px;font-size:8.2px;letter-spacing:-0.22px;color:#1f86bd">Adney, Leslie</div>
<div class="t" style="left:613.8000000000001px;top:431.40px;font-size:8.2px;letter-spacing:-0.22px;color:#3d4456">Hospital A</div>
<div class="t" style="left:739.0px;top:431.40px;font-size:8.2px;letter-spacing:0px;color:#3d4456">09-10-2024</div>
<div class="a" style="left:836.1px;top:432.80px;width:3px;height:3.2px;background:#e4e4e4;clip-path:polygon(0 0,100% 0,65% 100%,35% 100%)"></div>
<div class="t" style="left:847.1px;top:431.40px;font-size:8.2px;letter-spacing:0px;color:#3d4456">09-10-2024</div>
<div class="a" style="left:944.1px;top:432.80px;width:3px;height:3.2px;background:#e4e4e4;clip-path:polygon(0 0,100% 0,65% 100%,35% 100%)"></div>
<div class="t" style="left:955.1px;top:431.40px;font-size:8.2px;letter-spacing:0px;color:#3d4456">09-19-2024</div>
<div class="a" style="left:1052.1px;top:432.80px;width:3px;height:3.2px;background:#e4e4e4;clip-path:polygon(0 0,100% 0,65% 100%,35% 100%)"></div>
<div class="a" style="left:1062.6px;top:430.20px;width:8.6px;height:8.6px"><svg style="position:absolute;left:0;top:0" width="8.6" height="8.6" viewBox="0 0 8 8"><circle cx="3.9" cy="3.7" r="2.7" fill="none" stroke="#1b76b0" stroke-width="1.45"/><path d="M5.9 5.7 L7.5 7.4" stroke="#1b76b0" stroke-width="1.7" stroke-linecap="round"/></svg></div>
<div class="t" style="left:1072.0px;top:431.40px;font-size:8.2px;letter-spacing:-0.2px;color:#1f86bd">Final</div>
<span class="cb" style="left:180px;top:442.00px"></span>
<div class="t" style="left:208.0px;top:443.90px;font-size:8.2px;letter-spacing:0px;color:#1f86bd">SI24-0000362</div>
<div class="t" style="left:325.1px;top:443.90px;font-size:8.2px;letter-spacing:-0.22px;color:#3d4456">Reported</div>
<div class="t" style="left:471.20000000000005px;top:443.90px;font-size:8.2px;letter-spacing:-0.22px;color:#1f86bd">Brown, Blake</div>
<div class="t" style="left:613.8000000000001px;top:443.90px;font-size:8.2px;letter-spacing:-0.22px;color:#3d4456">ABC Clinic</div>
<div class="t" style="left:739.0px;top:443.90px;font-size:8.2px;letter-spacing:0px;color:#3d4456">09-10-2024</div>
<div class="a" style="left:836.1px;top:445.30px;width:3px;height:3.2px;background:#e4e4e4;clip-path:polygon(0 0,100% 0,65% 100%,35% 100%)"></div>
<div class="t" style="left:847.1px;top:443.90px;font-size:8.2px;letter-spacing:0px;color:#3d4456">09-10-2024</div>
<div class="a" style="left:944.1px;top:445.30px;width:3px;height:3.2px;background:#e4e4e4;clip-path:polygon(0 0,100% 0,65% 100%,35% 100%)"></div>
<div class="t" style="left:955.1px;top:443.90px;font-size:8.2px;letter-spacing:0px;color:#3d4456">09-16-2024</div>
<div class="a" style="left:1052.1px;top:445.30px;width:3px;height:3.2px;background:#e4e4e4;clip-path:polygon(0 0,100% 0,65% 100%,35% 100%)"></div>
<div class="a" style="left:1062.6px;top:442.70px;width:8.6px;height:8.6px"><svg style="position:absolute;left:0;top:0" width="8.6" height="8.6" viewBox="0 0 8 8"><circle cx="3.9" cy="3.7" r="2.7" fill="none" stroke="#1b76b0" stroke-width="1.45"/><path d="M5.9 5.7 L7.5 7.4" stroke="#1b76b0" stroke-width="1.7" stroke-linecap="round"/></svg></div>
<div class="t" style="left:1072.0px;top:443.90px;font-size:8.2px;letter-spacing:-0.2px;color:#1f86bd">Final</div>
<span class="cb" style="left:180px;top:454.50px"></span>
<div class="t" style="left:208.0px;top:456.40px;font-size:8.2px;letter-spacing:0px;color:#1f86bd">SI24-0000357</div>
<div class="t" style="left:325.1px;top:456.40px;font-size:8.2px;letter-spacing:-0.22px;color:#3d4456">Reported</div>
<div class="t" style="left:471.20000000000005px;top:456.40px;font-size:8.2px;letter-spacing:-0.22px;color:#1f86bd">Doe, Jane</div>
<div class="t" style="left:613.8000000000001px;top:456.40px;font-size:8.2px;letter-spacing:-0.22px;color:#3d4456">ARUP (updated)</div>
<div class="t" style="left:739.0px;top:456.40px;font-size:8.2px;letter-spacing:0px;color:#3d4456">09-04-2024</div>
<div class="a" style="left:836.1px;top:457.80px;width:3px;height:3.2px;background:#e4e4e4;clip-path:polygon(0 0,100% 0,65% 100%,35% 100%)"></div>
<div class="t" style="left:847.1px;top:456.40px;font-size:8.2px;letter-spacing:0px;color:#3d4456">09-04-2024</div>
<div class="a" style="left:944.1px;top:457.80px;width:3px;height:3.2px;background:#e4e4e4;clip-path:polygon(0 0,100% 0,65% 100%,35% 100%)"></div>
<div class="t" style="left:955.1px;top:456.40px;font-size:8.2px;letter-spacing:0px;color:#3d4456">09-04-2024</div>
<div class="a" style="left:1052.1px;top:457.80px;width:3px;height:3.2px;background:#e4e4e4;clip-path:polygon(0 0,100% 0,65% 100%,35% 100%)"></div>
<div class="a" style="left:1062.6px;top:455.20px;width:8.6px;height:8.6px"><svg style="position:absolute;left:0;top:0" width="8.6" height="8.6" viewBox="0 0 8 8"><circle cx="3.9" cy="3.7" r="2.7" fill="none" stroke="#1b76b0" stroke-width="1.45"/><path d="M5.9 5.7 L7.5 7.4" stroke="#1b76b0" stroke-width="1.7" stroke-linecap="round"/></svg></div>
<div class="t" style="left:1072.0px;top:456.40px;font-size:8.2px;letter-spacing:-0.2px;color:#1f86bd">Final</div>
<span class="cb" style="left:180px;top:467.00px"></span>
<div class="t" style="left:208.0px;top:468.90px;font-size:8.2px;letter-spacing:0px;color:#1f86bd">SI24-0000354</div>
<div class="t" style="left:325.1px;top:468.90px;font-size:8.2px;letter-spacing:-0.22px;color:#3d4456">Reported (Partially)</div>
<div class="t" style="left:471.20000000000005px;top:468.90px;font-size:8.2px;letter-spacing:-0.22px;color:#1f86bd">Brown, Blake</div>
<div class="t" style="left:613.8000000000001px;top:468.90px;font-size:8.2px;letter-spacing:-0.22px;color:#3d4456">ABC Clinic</div>
<div class="t" style="left:739.0px;top:468.90px;font-size:8.2px;letter-spacing:0px;color:#3d4456">08-30-2024</div>
<div class="a" style="left:836.1px;top:470.30px;width:3px;height:3.2px;background:#e4e4e4;clip-path:polygon(0 0,100% 0,65% 100%,35% 100%)"></div>
<div class="t" style="left:847.1px;top:468.90px;font-size:8.2px;letter-spacing:0px;color:#3d4456">08-30-2024</div>
<div class="a" style="left:944.1px;top:470.30px;width:3px;height:3.2px;background:#e4e4e4;clip-path:polygon(0 0,100% 0,65% 100%,35% 100%)"></div>
<div class="t" style="left:955.1px;top:468.90px;font-size:8.2px;letter-spacing:0px;color:#3d4456">08-30-2024</div>
<div class="a" style="left:1052.1px;top:470.30px;width:3px;height:3.2px;background:#e4e4e4;clip-path:polygon(0 0,100% 0,65% 100%,35% 100%)"></div>
<div class="a" style="left:1062.6px;top:467.70px;width:8.6px;height:8.6px"><svg style="position:absolute;left:0;top:0" width="8.6" height="8.6" viewBox="0 0 8 8"><circle cx="3.9" cy="3.7" r="2.7" fill="none" stroke="#1b76b0" stroke-width="1.45"/><path d="M5.9 5.7 L7.5 7.4" stroke="#1b76b0" stroke-width="1.7" stroke-linecap="round"/></svg></div>
<div class="t" style="left:1072.0px;top:468.90px;font-size:8.2px;letter-spacing:-0.2px;color:#1f86bd">Partial</div>
<span class="cb" style="left:180px;top:479.50px"></span>
<div class="t" style="left:208.0px;top:481.40px;font-size:8.2px;letter-spacing:0px;color:#1f86bd">SI24-0000350</div>
<div class="t" style="left:325.1px;top:481.40px;font-size:8.2px;letter-spacing:-0.22px;color:#3d4456">Reported</div>
<div class="t" style="left:471.20000000000005px;top:481.40px;font-size:8.2px;letter-spacing:-0.22px;color:#1f86bd">Brown, Blake</div>
<div class="t" style="left:613.8000000000001px;top:481.40px;font-size:8.2px;letter-spacing:-0.22px;color:#3d4456">ABC Clinic</div>
<div class="t" style="left:739.0px;top:481.40px;font-size:8.2px;letter-spacing:0px;color:#3d4456">08-29-2024</div>
<div class="a" style="left:836.1px;top:482.80px;width:3px;height:3.2px;background:#e4e4e4;clip-path:polygon(0 0,100% 0,65% 100%,35% 100%)"></div>
<div class="t" style="left:847.1px;top:481.40px;font-size:8.2px;letter-spacing:0px;color:#3d4456">08-29-2024</div>
<div class="a" style="left:944.1px;top:482.80px;width:3px;height:3.2px;background:#e4e4e4;clip-path:polygon(0 0,100% 0,65% 100%,35% 100%)"></div>
<div class="t" style="left:955.1px;top:481.40px;font-size:8.2px;letter-spacing:0px;color:#3d4456">08-29-2024</div>
<div class="a" style="left:1052.1px;top:482.80px;width:3px;height:3.2px;background:#e4e4e4;clip-path:polygon(0 0,100% 0,65% 100%,35% 100%)"></div>
<div class="a" style="left:1062.6px;top:480.20px;width:8.6px;height:8.6px"><svg style="position:absolute;left:0;top:0" width="8.6" height="8.6" viewBox="0 0 8 8"><circle cx="3.9" cy="3.7" r="2.7" fill="none" stroke="#1b76b0" stroke-width="1.45"/><path d="M5.9 5.7 L7.5 7.4" stroke="#1b76b0" stroke-width="1.7" stroke-linecap="round"/></svg></div>
<div class="t" style="left:1072.0px;top:481.40px;font-size:8.2px;letter-spacing:-0.2px;color:#1f86bd">Final</div>
<span class="cb" style="left:180px;top:492.00px"></span>
<div class="t" style="left:208.0px;top:493.90px;font-size:8.2px;letter-spacing:0px;color:#1f86bd">SI24-0000342</div>
<div class="t" style="left:325.1px;top:493.90px;font-size:8.2px;letter-spacing:-0.22px;color:#3d4456">Reported</div>
<div class="t" style="left:471.20000000000005px;top:493.90px;font-size:8.2px;letter-spacing:-0.22px;color:#1f86bd">Shy, Hello</div>
<div class="t" style="left:613.8000000000001px;top:493.90px;font-size:8.2px;letter-spacing:-0.22px;color:#3d4456">Hospital A</div>
<div class="t" style="left:739.0px;top:493.90px;font-size:8.2px;letter-spacing:0px;color:#3d4456">08-27-2024</div>
<div class="a" style="left:836.1px;top:495.30px;width:3px;height:3.2px;background:#e4e4e4;clip-path:polygon(0 0,100% 0,65% 100%,35% 100%)"></div>
<div class="t" style="left:847.1px;top:493.90px;font-size:8.2px;letter-spacing:0px;color:#3d4456">08-27-2024</div>
<div class="a" style="left:944.1px;top:495.30px;width:3px;height:3.2px;background:#e4e4e4;clip-path:polygon(0 0,100% 0,65% 100%,35% 100%)"></div>
<div class="t" style="left:955.1px;top:493.90px;font-size:8.2px;letter-spacing:0px;color:#3d4456">08-27-2024</div>
<div class="a" style="left:1052.1px;top:495.30px;width:3px;height:3.2px;background:#e4e4e4;clip-path:polygon(0 0,100% 0,65% 100%,35% 100%)"></div>
<div class="a" style="left:1062.6px;top:492.70px;width:8.6px;height:8.6px"><svg style="position:absolute;left:0;top:0" width="8.6" height="8.6" viewBox="0 0 8 8"><circle cx="3.9" cy="3.7" r="2.7" fill="none" stroke="#1b76b0" stroke-width="1.45"/><path d="M5.9 5.7 L7.5 7.4" stroke="#1b76b0" stroke-width="1.7" stroke-linecap="round"/></svg></div>
<div class="t" style="left:1072.0px;top:493.90px;font-size:8.2px;letter-spacing:-0.2px;color:#1f86bd">Final</div>
<span class="cb" style="left:180px;top:504.50px"></span>
<div class="t" style="left:208.0px;top:506.40px;font-size:8.2px;letter-spacing:0px;color:#1f86bd">SI24-0000338</div>
<div class="t" style="left:325.1px;top:506.40px;font-size:8.2px;letter-spacing:-0.22px;color:#3d4456">Reported</div>
<div class="t" style="left:471.20000000000005px;top:506.40px;font-size:8.2px;letter-spacing:-0.22px;color:#1f86bd">Brown, Blake</div>
<div class="t" style="left:613.8000000000001px;top:506.40px;font-size:8.2px;letter-spacing:-0.22px;color:#3d4456">ABC Clinic</div>
<div class="t" style="left:739.0px;top:506.40px;font-size:8.2px;letter-spacing:0px;color:#3d4456">08-19-2024</div>
<div class="a" style="left:836.1px;top:507.80px;width:3px;height:3.2px;background:#e4e4e4;clip-path:polygon(0 0,100% 0,65% 100%,35% 100%)"></div>
<div class="t" style="left:847.1px;top:506.40px;font-size:8.2px;letter-spacing:0px;color:#3d4456">08-19-2024</div>
<div class="a" style="left:944.1px;top:507.80px;width:3px;height:3.2px;background:#e4e4e4;clip-path:polygon(0 0,100% 0,65% 100%,35% 100%)"></div>
<div class="t" style="left:955.1px;top:506.40px;font-size:8.2px;letter-spacing:0px;color:#3d4456">08-19-2024</div>
<div class="a" style="left:1052.1px;top:507.80px;width:3px;height:3.2px;background:#e4e4e4;clip-path:polygon(0 0,100% 0,65% 100%,35% 100%)"></div>
<div class="a" style="left:1062.6px;top:505.20px;width:8.6px;height:8.6px"><svg style="position:absolute;left:0;top:0" width="8.6" height="8.6" viewBox="0 0 8 8"><circle cx="3.9" cy="3.7" r="2.7" fill="none" stroke="#1b76b0" stroke-width="1.45"/><path d="M5.9 5.7 L7.5 7.4" stroke="#1b76b0" stroke-width="1.7" stroke-linecap="round"/></svg></div>
<div class="t" style="left:1072.0px;top:506.40px;font-size:8.2px;letter-spacing:-0.2px;color:#1f86bd">Final</div>
<span class="cb" style="left:180px;top:517.00px"></span>
<div class="t" style="left:208.0px;top:518.90px;font-size:8.2px;letter-spacing:0px;color:#1f86bd">SI24-0000336</div>
<div class="t" style="left:325.1px;top:518.90px;font-size:8.2px;letter-spacing:-0.22px;color:#3d4456">Reported</div>
<div class="t" style="left:471.20000000000005px;top:518.90px;font-size:8.2px;letter-spacing:-0.22px;color:#1f86bd">espiritu, shy</div>
<div class="t" style="left:613.8000000000001px;top:518.90px;font-size:8.2px;letter-spacing:-0.22px;color:#3d4456">ABC Clinic</div>
<div class="t" style="left:739.0px;top:518.90px;font-size:8.2px;letter-spacing:0px;color:#3d4456">08-15-2024</div>
<div class="a" style="left:836.1px;top:520.30px;width:3px;height:3.2px;background:#e4e4e4;clip-path:polygon(0 0,100% 0,65% 100%,35% 100%)"></div>
<div class="t" style="left:847.1px;top:518.90px;font-size:8.2px;letter-spacing:0px;color:#3d4456">08-15-2024</div>
<div class="a" style="left:944.1px;top:520.30px;width:3px;height:3.2px;background:#e4e4e4;clip-path:polygon(0 0,100% 0,65% 100%,35% 100%)"></div>
<div class="t" style="left:955.1px;top:518.90px;font-size:8.2px;letter-spacing:0px;color:#3d4456">08-15-2024</div>
<div class="a" style="left:1052.1px;top:520.30px;width:3px;height:3.2px;background:#e4e4e4;clip-path:polygon(0 0,100% 0,65% 100%,35% 100%)"></div>
<div class="a" style="left:1062.6px;top:517.70px;width:8.6px;height:8.6px"><svg style="position:absolute;left:0;top:0" width="8.6" height="8.6" viewBox="0 0 8 8"><circle cx="3.9" cy="3.7" r="2.7" fill="none" stroke="#1b76b0" stroke-width="1.45"/><path d="M5.9 5.7 L7.5 7.4" stroke="#1b76b0" stroke-width="1.7" stroke-linecap="round"/></svg></div>
<div class="t" style="left:1072.0px;top:518.90px;font-size:8.2px;letter-spacing:-0.2px;color:#1f86bd">Final</div>
<span class="cb" style="left:180px;top:529.50px"></span>
<div class="t" style="left:208.0px;top:531.40px;font-size:8.2px;letter-spacing:0px;color:#1f86bd">SI24-0000335</div>
<div class="t" style="left:325.1px;top:531.40px;font-size:8.2px;letter-spacing:-0.22px;color:#3d4456">Reported</div>
<div class="t" style="left:471.20000000000005px;top:531.40px;font-size:8.2px;letter-spacing:-0.22px;color:#1f86bd">espiritu, shy</div>
<div class="t" style="left:613.8000000000001px;top:531.40px;font-size:8.2px;letter-spacing:-0.22px;color:#3d4456">ABC Clinic</div>
<div class="t" style="left:739.0px;top:531.40px;font-size:8.2px;letter-spacing:0px;color:#3d4456">08-15-2024</div>
<div class="a" style="left:836.1px;top:532.80px;width:3px;height:3.2px;background:#e4e4e4;clip-path:polygon(0 0,100% 0,65% 100%,35% 100%)"></div>
<div class="t" style="left:847.1px;top:531.40px;font-size:8.2px;letter-spacing:0px;color:#3d4456">08-15-2024</div>
<div class="a" style="left:944.1px;top:532.80px;width:3px;height:3.2px;background:#e4e4e4;clip-path:polygon(0 0,100% 0,65% 100%,35% 100%)"></div>
<div class="t" style="left:955.1px;top:531.40px;font-size:8.2px;letter-spacing:0px;color:#3d4456">09-09-2024</div>
<div class="a" style="left:1052.1px;top:532.80px;width:3px;height:3.2px;background:#e4e4e4;clip-path:polygon(0 0,100% 0,65% 100%,35% 100%)"></div>
<div class="a" style="left:1062.6px;top:530.20px;width:8.6px;height:8.6px"><svg style="position:absolute;left:0;top:0" width="8.6" height="8.6" viewBox="0 0 8 8"><circle cx="3.9" cy="3.7" r="2.7" fill="none" stroke="#1b76b0" stroke-width="1.45"/><path d="M5.9 5.7 L7.5 7.4" stroke="#1b76b0" stroke-width="1.7" stroke-linecap="round"/></svg></div>
<div class="t" style="left:1072.0px;top:531.40px;font-size:8.2px;letter-spacing:-0.2px;color:#1f86bd">Final</div>
<span class="cb" style="left:180px;top:542.00px"></span>
<div class="t" style="left:208.0px;top:543.90px;font-size:8.2px;letter-spacing:0px;color:#1f86bd">SI24-0000334</div>
<div class="t" style="left:325.1px;top:543.90px;font-size:8.2px;letter-spacing:-0.22px;color:#3d4456">Reported</div>
<div class="t" style="left:471.20000000000005px;top:543.90px;font-size:8.2px;letter-spacing:-0.22px;color:#1f86bd">Brown, Blake</div>
<div class="t" style="left:613.8000000000001px;top:543.90px;font-size:8.2px;letter-spacing:-0.22px;color:#3d4456">ABC Clinic</div>
<div class="t" style="left:739.0px;top:543.90px;font-size:8.2px;letter-spacing:0px;color:#3d4456">08-15-2024</div>
<div class="a" style="left:836.1px;top:545.30px;width:3px;height:3.2px;background:#e4e4e4;clip-path:polygon(0 0,100% 0,65% 100%,35% 100%)"></div>
<div class="t" style="left:847.1px;top:543.90px;font-size:8.2px;letter-spacing:0px;color:#3d4456">08-15-2024</div>
<div class="a" style="left:944.1px;top:545.30px;width:3px;height:3.2px;background:#e4e4e4;clip-path:polygon(0 0,100% 0,65% 100%,35% 100%)"></div>
<div class="t" style="left:955.1px;top:543.90px;font-size:8.2px;letter-spacing:0px;color:#3d4456">08-15-2024</div>
<div class="a" style="left:1052.1px;top:545.30px;width:3px;height:3.2px;background:#e4e4e4;clip-path:polygon(0 0,100% 0,65% 100%,35% 100%)"></div>
<div class="a" style="left:1062.6px;top:542.70px;width:8.6px;height:8.6px"><svg style="position:absolute;left:0;top:0" width="8.6" height="8.6" viewBox="0 0 8 8"><circle cx="3.9" cy="3.7" r="2.7" fill="none" stroke="#1b76b0" stroke-width="1.45"/><path d="M5.9 5.7 L7.5 7.4" stroke="#1b76b0" stroke-width="1.7" stroke-linecap="round"/></svg></div>
<div class="t" style="left:1072.0px;top:543.90px;font-size:8.2px;letter-spacing:-0.2px;color:#1f86bd">Final</div>
<span class="cb" style="left:180px;top:554.50px"></span>
<div class="t" style="left:208.0px;top:556.40px;font-size:8.2px;letter-spacing:0px;color:#1f86bd">SI24-0000332</div>
<div class="t" style="left:325.1px;top:556.40px;font-size:8.2px;letter-spacing:-0.22px;color:#3d4456">Reported</div>
<div class="t" style="left:471.20000000000005px;top:556.40px;font-size:8.2px;letter-spacing:-0.22px;color:#1f86bd">espiritu, shy</div>
<div class="t" style="left:613.8000000000001px;top:556.40px;font-size:8.2px;letter-spacing:-0.22px;color:#3d4456">ABC Clinic</div>
<div class="t" style="left:739.0px;top:556.40px;font-size:8.2px;letter-spacing:0px;color:#3d4456">08-14-2024</div>
<div class="a" style="left:836.1px;top:557.80px;width:3px;height:3.2px;background:#e4e4e4;clip-path:polygon(0 0,100% 0,65% 100%,35% 100%)"></div>
<div class="t" style="left:847.1px;top:556.40px;font-size:8.2px;letter-spacing:0px;color:#3d4456">08-14-2024</div>
<div class="a" style="left:944.1px;top:557.80px;width:3px;height:3.2px;background:#e4e4e4;clip-path:polygon(0 0,100% 0,65% 100%,35% 100%)"></div>
<div class="t" style="left:955.1px;top:556.40px;font-size:8.2px;letter-spacing:0px;color:#3d4456">08-14-2024</div>
<div class="a" style="left:1052.1px;top:557.80px;width:3px;height:3.2px;background:#e4e4e4;clip-path:polygon(0 0,100% 0,65% 100%,35% 100%)"></div>
<div class="a" style="left:1062.6px;top:555.20px;width:8.6px;height:8.6px"><svg style="position:absolute;left:0;top:0" width="8.6" height="8.6" viewBox="0 0 8 8"><circle cx="3.9" cy="3.7" r="2.7" fill="none" stroke="#1b76b0" stroke-width="1.45"/><path d="M5.9 5.7 L7.5 7.4" stroke="#1b76b0" stroke-width="1.7" stroke-linecap="round"/></svg></div>
<div class="t" style="left:1072.0px;top:556.40px;font-size:8.2px;letter-spacing:-0.2px;color:#1f86bd">Final</div>
<span class="cb" style="left:180px;top:567.00px"></span>
<div class="t" style="left:208.0px;top:568.90px;font-size:8.2px;letter-spacing:0px;color:#1f86bd">SI24-0000331</div>
<div class="t" style="left:325.1px;top:568.90px;font-size:8.2px;letter-spacing:-0.22px;color:#3d4456">Reported</div>
<div class="t" style="left:471.20000000000005px;top:568.90px;font-size:8.2px;letter-spacing:-0.22px;color:#1f86bd">espiritu, shy</div>
<div class="t" style="left:613.8000000000001px;top:568.90px;font-size:8.2px;letter-spacing:-0.22px;color:#3d4456">ABC Clinic</div>
<div class="t" style="left:739.0px;top:568.90px;font-size:8.2px;letter-spacing:0px;color:#3d4456">08-14-2024</div>
<div class="a" style="left:836.1px;top:570.30px;width:3px;height:3.2px;background:#e4e4e4;clip-path:polygon(0 0,100% 0,65% 100%,35% 100%)"></div>
<div class="t" style="left:847.1px;top:568.90px;font-size:8.2px;letter-spacing:0px;color:#3d4456">08-14-2024</div>
<div class="a" style="left:944.1px;top:570.30px;width:3px;height:3.2px;background:#e4e4e4;clip-path:polygon(0 0,100% 0,65% 100%,35% 100%)"></div>
<div class="t" style="left:955.1px;top:568.90px;font-size:8.2px;letter-spacing:0px;color:#3d4456">08-14-2024</div>
<div class="a" style="left:1052.1px;top:570.30px;width:3px;height:3.2px;background:#e4e4e4;clip-path:polygon(0 0,100% 0,65% 100%,35% 100%)"></div>
<div class="a" style="left:1062.6px;top:567.70px;width:8.6px;height:8.6px"><svg style="position:absolute;left:0;top:0" width="8.6" height="8.6" viewBox="0 0 8 8"><circle cx="3.9" cy="3.7" r="2.7" fill="none" stroke="#1b76b0" stroke-width="1.45"/><path d="M5.9 5.7 L7.5 7.4" stroke="#1b76b0" stroke-width="1.7" stroke-linecap="round"/></svg></div>
<div class="t" style="left:1072.0px;top:568.90px;font-size:8.2px;letter-spacing:-0.2px;color:#1f86bd">Final</div>
<span class="cb" style="left:180px;top:579.50px"></span>
<div class="t" style="left:208.0px;top:581.40px;font-size:8.2px;letter-spacing:0px;color:#1f86bd">SI24-0000330</div>
<div class="t" style="left:325.1px;top:581.40px;font-size:8.2px;letter-spacing:-0.22px;color:#3d4456">Reported</div>
<div class="t" style="left:471.20000000000005px;top:581.40px;font-size:8.2px;letter-spacing:-0.22px;color:#1f86bd">espiritu, shy</div>
<div class="t" style="left:613.8000000000001px;top:581.40px;font-size:8.2px;letter-spacing:-0.22px;color:#3d4456">ABC Clinic</div>
<div class="t" style="left:739.0px;top:581.40px;font-size:8.2px;letter-spacing:0px;color:#3d4456">08-14-2024</div>
<div class="a" style="left:836.1px;top:582.80px;width:3px;height:3.2px;background:#e4e4e4;clip-path:polygon(0 0,100% 0,65% 100%,35% 100%)"></div>
<div class="t" style="left:847.1px;top:581.40px;font-size:8.2px;letter-spacing:0px;color:#3d4456">08-14-2024</div>
<div class="a" style="left:944.1px;top:582.80px;width:3px;height:3.2px;background:#e4e4e4;clip-path:polygon(0 0,100% 0,65% 100%,35% 100%)"></div>
<div class="t" style="left:955.1px;top:581.40px;font-size:8.2px;letter-spacing:0px;color:#3d4456">08-14-2024</div>
<div class="a" style="left:1052.1px;top:582.80px;width:3px;height:3.2px;background:#e4e4e4;clip-path:polygon(0 0,100% 0,65% 100%,35% 100%)"></div>
<div class="a" style="left:1062.6px;top:580.20px;width:8.6px;height:8.6px"><svg style="position:absolute;left:0;top:0" width="8.6" height="8.6" viewBox="0 0 8 8"><circle cx="3.9" cy="3.7" r="2.7" fill="none" stroke="#1b76b0" stroke-width="1.45"/><path d="M5.9 5.7 L7.5 7.4" stroke="#1b76b0" stroke-width="1.7" stroke-linecap="round"/></svg></div>
<div class="t" style="left:1072.0px;top:581.40px;font-size:8.2px;letter-spacing:-0.2px;color:#1f86bd">Final</div>
<span class="cb" style="left:180px;top:592.00px"></span>
<div class="t" style="left:208.0px;top:593.90px;font-size:8.2px;letter-spacing:0px;color:#1f86bd">SI24-0000328</div>
<div class="t" style="left:325.1px;top:593.90px;font-size:8.2px;letter-spacing:-0.22px;color:#3d4456">Reported</div>
<div class="t" style="left:471.20000000000005px;top:593.90px;font-size:8.2px;letter-spacing:-0.22px;color:#1f86bd">espiritu, shy</div>
<div class="t" style="left:613.8000000000001px;top:593.90px;font-size:8.2px;letter-spacing:-0.22px;color:#3d4456">ABC Clinic</div>
<div class="t" style="left:739.0px;top:593.90px;font-size:8.2px;letter-spacing:0px;color:#3d4456">08-14-2024</div>
<div class="a" style="left:836.1px;top:595.30px;width:3px;height:3.2px;background:#e4e4e4;clip-path:polygon(0 0,100% 0,65% 100%,35% 100%)"></div>
<div class="t" style="left:847.1px;top:593.90px;font-size:8.2px;letter-spacing:0px;color:#3d4456">08-14-2024</div>
<div class="a" style="left:944.1px;top:595.30px;width:3px;height:3.2px;background:#e4e4e4;clip-path:polygon(0 0,100% 0,65% 100%,35% 100%)"></div>
<div class="t" style="left:955.1px;top:593.90px;font-size:8.2px;letter-spacing:0px;color:#3d4456">08-14-2024</div>
<div class="a" style="left:1052.1px;top:595.30px;width:3px;height:3.2px;background:#e4e4e4;clip-path:polygon(0 0,100% 0,65% 100%,35% 100%)"></div>
<div class="a" style="left:1062.6px;top:592.70px;width:8.6px;height:8.6px"><svg style="position:absolute;left:0;top:0" width="8.6" height="8.6" viewBox="0 0 8 8"><circle cx="3.9" cy="3.7" r="2.7" fill="none" stroke="#1b76b0" stroke-width="1.45"/><path d="M5.9 5.7 L7.5 7.4" stroke="#1b76b0" stroke-width="1.7" stroke-linecap="round"/></svg></div>
<div class="t" style="left:1072.0px;top:593.90px;font-size:8.2px;letter-spacing:-0.2px;color:#1f86bd">Final</div>
<span class="cb" style="left:180px;top:604.50px"></span>
<div class="t" style="left:208.0px;top:606.40px;font-size:8.2px;letter-spacing:0px;color:#1f86bd">SI24-0000327</div>
<div class="t" style="left:325.1px;top:606.40px;font-size:8.2px;letter-spacing:-0.22px;color:#3d4456">Reported</div>
<div class="t" style="left:471.20000000000005px;top:606.40px;font-size:8.2px;letter-spacing:-0.22px;color:#1f86bd">espiritu, shy</div>
<div class="t" style="left:613.8000000000001px;top:606.40px;font-size:8.2px;letter-spacing:-0.22px;color:#3d4456">ABC Clinic</div>
<div class="t" style="left:739.0px;top:606.40px;font-size:8.2px;letter-spacing:0px;color:#3d4456">08-14-2024</div>
<div class="a" style="left:836.1px;top:607.80px;width:3px;height:3.2px;background:#e4e4e4;clip-path:polygon(0 0,100% 0,65% 100%,35% 100%)"></div>
<div class="t" style="left:847.1px;top:606.40px;font-size:8.2px;letter-spacing:0px;color:#3d4456">08-14-2024</div>
<div class="a" style="left:944.1px;top:607.80px;width:3px;height:3.2px;background:#e4e4e4;clip-path:polygon(0 0,100% 0,65% 100%,35% 100%)"></div>
<div class="t" style="left:955.1px;top:606.40px;font-size:8.2px;letter-spacing:0px;color:#3d4456">08-14-2024</div>
<div class="a" style="left:1052.1px;top:607.80px;width:3px;height:3.2px;background:#e4e4e4;clip-path:polygon(0 0,100% 0,65% 100%,35% 100%)"></div>
<div class="a" style="left:1062.6px;top:605.20px;width:8.6px;height:8.6px"><svg style="position:absolute;left:0;top:0" width="8.6" height="8.6" viewBox="0 0 8 8"><circle cx="3.9" cy="3.7" r="2.7" fill="none" stroke="#1b76b0" stroke-width="1.45"/><path d="M5.9 5.7 L7.5 7.4" stroke="#1b76b0" stroke-width="1.7" stroke-linecap="round"/></svg></div>
<div class="t" style="left:1072.0px;top:606.40px;font-size:8.2px;letter-spacing:-0.2px;color:#1f86bd">Final</div>
<span class="cb" style="left:180px;top:617.00px"></span>
<div class="t" style="left:208.0px;top:618.90px;font-size:8.2px;letter-spacing:0px;color:#1f86bd">SI24-0000326</div>
<div class="t" style="left:325.1px;top:618.90px;font-size:8.2px;letter-spacing:-0.22px;color:#3d4456">Reported</div>
<div class="t" style="left:471.20000000000005px;top:618.90px;font-size:8.2px;letter-spacing:-0.22px;color:#1f86bd">espiritu, shy</div>
<div class="t" style="left:613.8000000000001px;top:618.90px;font-size:8.2px;letter-spacing:-0.22px;color:#3d4456">ABC Clinic</div>
<div class="t" style="left:739.0px;top:618.90px;font-size:8.2px;letter-spacing:0px;color:#3d4456">08-14-2024</div>
<div class="a" style="left:836.1px;top:620.30px;width:3px;height:3.2px;background:#e4e4e4;clip-path:polygon(0 0,100% 0,65% 100%,35% 100%)"></div>
<div class="t" style="left:847.1px;top:618.90px;font-size:8.2px;letter-spacing:0px;color:#3d4456">08-14-2024</div>
<div class="a" style="left:944.1px;top:620.30px;width:3px;height:3.2px;background:#e4e4e4;clip-path:polygon(0 0,100% 0,65% 100%,35% 100%)"></div>
<div class="t" style="left:955.1px;top:618.90px;font-size:8.2px;letter-spacing:0px;color:#3d4456">08-14-2024</div>
<div class="a" style="left:1052.1px;top:620.30px;width:3px;height:3.2px;background:#e4e4e4;clip-path:polygon(0 0,100% 0,65% 100%,35% 100%)"></div>
<div class="a" style="left:1062.6px;top:617.70px;width:8.6px;height:8.6px"><svg style="position:absolute;left:0;top:0" width="8.6" height="8.6" viewBox="0 0 8 8"><circle cx="3.9" cy="3.7" r="2.7" fill="none" stroke="#1b76b0" stroke-width="1.45"/><path d="M5.9 5.7 L7.5 7.4" stroke="#1b76b0" stroke-width="1.7" stroke-linecap="round"/></svg></div>
<div class="t" style="left:1072.0px;top:618.90px;font-size:8.2px;letter-spacing:-0.2px;color:#1f86bd">Final</div>
<div class="a" style="left:111px;top:101px;width:280px;height:72px;background:#0039d9;border-radius:8px;box-shadow:0 1px 3px rgba(0,0,0,0.15)"></div>
<div class="a" style="left:105px;top:129.9px;border-top:7.1px solid transparent;border-bottom:7.1px solid transparent;border-right:6.2px solid #0039d9"></div>
<div class="t" style="left:123.3px;top:111.7px;font-size:17.2px;line-height:24.4px;color:#fff;white-space:normal;width:260px">From the side menu, click on<br>Orders.</div>
<div class="a" style="left:65.3px;top:121.3px;width:28.6px;height:28.6px;border-radius:50%;border:1.3px solid #1539dc"></div>
<div class="a" style="left:72.7px;top:128.6px;width:14.2px;height:14.2px;border-radius:50%;border:3.1px solid #0b3ee8"></div>
<div class="a" style="left:1118px;top:564px;width:49.6px;height:49.6px;background:#fff;border:1px solid #d4d4d4;border-radius:9px;box-shadow:0 1px 4px rgba(0,0,0,0.08)"></div>
<svg class="a" style="left:1128px;top:575px" width="30" height="26" viewBox="0 0 30 26"><ellipse cx="15.1" cy="18.2" rx="12" ry="5" fill="#141923"/><rect x="3.1" y="13.6" width="24" height="4.6" fill="#141923"/><ellipse cx="15.1" cy="13.6" rx="12" ry="5" fill="#141923"/><ellipse cx="15.1" cy="13.6" rx="11.1" ry="4.2" fill="#fff"/><ellipse cx="15.1" cy="12.1" rx="8.9" ry="4.4" fill="#141923"/><rect x="6.2" y="8.6" width="17.8" height="3.5" fill="#141923"/><ellipse cx="15.1" cy="8.6" rx="8.9" ry="4.4" fill="#141923"/><ellipse cx="15.1" cy="8.6" rx="8.1" ry="3.7" fill="#fff"/></svg>
</div></body></html>
